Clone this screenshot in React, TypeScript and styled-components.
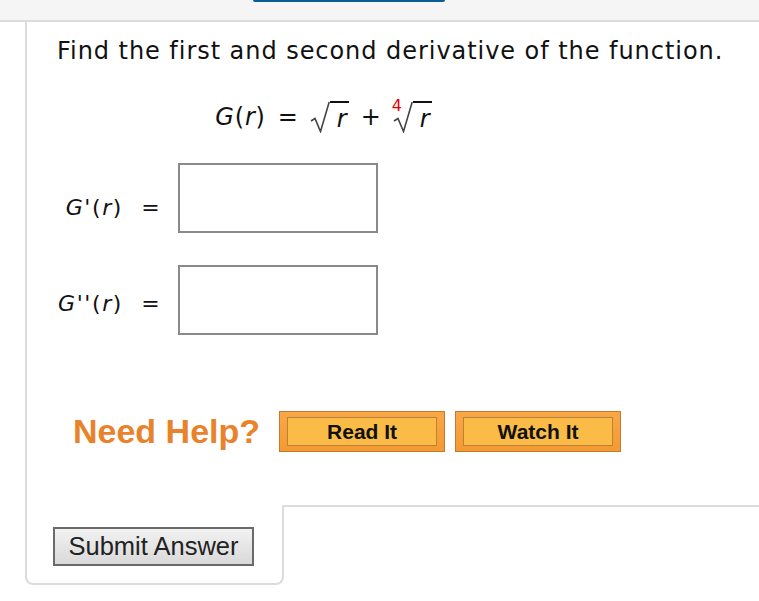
import React from "react";
import styled, { createGlobalStyle } from "styled-components";

const Global = createGlobalStyle`
  html, body { margin: 0; padding: 0; background: #fff; }
  body { width: 759px; height: 601px; overflow: hidden; font-family: "DejaVu Sans", Verdana, sans-serif; }
`;

const TopBar = styled.div`
  height: 20px;
  background: #f5f5f5;
  border-bottom: 2px solid #dcdcdc;
  display: flex;
  align-items: flex-start;
`;

const ActiveTab = styled.div`
  margin-left: 253px;
  width: 192px;
  height: 2px;
  background: #0b5d97;
  border-radius: 0 0 4px 4px;
`;

const Panel = styled.div`
  margin-left: 25px;
  border-left: 2px solid #dcdcdc;
  height: 483px;
  padding-left: 30px;
  box-sizing: border-box;
  padding-top: 15px;
`;

const Question = styled.div`
  font-size: 24px;
  line-height: 28px;
  letter-spacing: 0.95px;
  color: #111;
  white-space: nowrap;
`;

const Equation = styled.div`
  width: 533px;
  height: 32px;
  margin-top: 36px;
  display: flex;
  align-items: center;
  justify-content: center;
  font-size: 24px;
  line-height: 32px;
  color: #111;
  white-space: nowrap;
`;

const Term = styled.span`
  letter-spacing: 0.8px;
`;

const Var = styled.i`
  font-style: italic;
`;

const Op = styled.span`
  margin: 0 12px;
`;

const Radical = styled.span`
  position: relative;
  display: inline-flex;
  align-items: stretch;
  height: 32px;
`;

const RootSvg = styled.svg`
  width: 20px;
  height: 32px;
  display: block;
`;

const Radicand = styled.span`
  display: inline-flex;
  align-items: center;
  border-top: 2px solid #111;
  box-sizing: border-box;
  height: 32px;
  padding: 2px 2px 0 7px;
  font-style: italic;
  line-height: 28px;
`;

const Index = styled.span`
  position: absolute;
  left: -1px;
  top: -3px;
  font-size: 16px;
  line-height: 16px;
  color: #e00000;
`;

const Answers = styled.div`
  margin-top: 30px;
  display: grid;
  grid-template-columns: 66px 55px 200px;
  row-gap: 32px;
  align-items: center;
`;

const Label = styled.div<{ $shift: number }>`
  text-align: right;
  font-size: 22px;
  letter-spacing: 1.6px;
  color: #111;
  white-space: nowrap;
  margin-top: ${(p) => p.$shift * 2}px;
`;

const Eq = styled.div<{ $shift: number }>`
  text-align: center;
  font-size: 22px;
  color: #111;
  margin-top: ${(p) => p.$shift * 2}px;
`;

const AnswerBox = styled.div`
  width: 200px;
  height: 70px;
  box-sizing: border-box;
  border: 2px solid #8a8a8a;
  background: #fff;
`;

const HelpRow = styled.div`
  margin-top: 76px;
  display: flex;
  align-items: center;
  padding-left: 16px;
`;

const HelpText = styled.span`
  font-family: "Liberation Sans", Arial, sans-serif;
  font-weight: bold;
  font-size: 34px;
  color: #e9832b;
  margin-right: 19px;
  white-space: nowrap;
`;

const HelpButton = styled.div`
  width: 166px;
  height: 41px;
  box-sizing: border-box;
  border: 1px solid #c27a37;
  background: linear-gradient(#f9a746, #f59a30);
  padding: 5px 7px;
  margin-right: 10px;
  display: flex;
`;

const HelpInner = styled.div`
  flex: 1;
  border: 1px solid #b9803f;
  background: #fbbc47;
  display: flex;
  align-items: center;
  justify-content: center;
  font-family: "Liberation Sans", Arial, sans-serif;
  font-weight: bold;
  font-size: 21px;
  color: #111;
  white-space: nowrap;
`;

const Footer = styled.div`
  display: flex;
  height: 80px;
`;

const SubmitCell = styled.div`
  margin-left: 25px;
  width: 259px;
  box-sizing: border-box;
  border-left: 2px solid #dcdcdc;
  border-right: 2px solid #dcdcdc;
  border-bottom: 2px solid #dcdcdc;
  border-radius: 0 0 8px 8px;
  padding: 22px 0 0 26px;
`;

const Rest = styled.div`
  flex: 1;
  border-top: 2px solid #dcdcdc;
  margin-left: -2px;
`;

const SubmitButton = styled.div`
  width: 201px;
  height: 39px;
  box-sizing: border-box;
  border: 2px solid #6a6a6a;
  background: linear-gradient(#f2f2f2, #d9d9d9);
  font-family: "Liberation Sans", Arial, sans-serif;
  font-size: 25.5px;
  color: #222;
  display: flex;
  align-items: center;
  justify-content: center;
  white-space: nowrap;
`;

function RootSign() {
  return (
    <RootSvg viewBox="0 0 20 32">
      <path d="M1 20 L5 17.5 L10.5 30.5 L19.2 1" fill="none" stroke="#444" strokeWidth="1.6" strokeLinejoin="miter" />
    </RootSvg>
  );
}

export default function App() {
  return (
    <>
      <Global />
      <TopBar>
        <ActiveTab />
      </TopBar>
      <Panel>
        <Question>Find the first and second derivative of the function.</Question>
        <Equation>
          <Term>
            <Var>G</Var>(<Var>r</Var>)
          </Term>
          <Op>=</Op>
          <Radical>
            <RootSign />
            <Radicand>r</Radicand>
          </Radical>
          <Op>+</Op>
          <Radical>
            <Index>4</Index>
            <RootSign />
            <Radicand>r</Radicand>
          </Radical>
        </Equation>
        <Answers>
          <Label $shift={9}>
            <Var>G</Var>'(<Var>r</Var>)
          </Label>
          <Eq $shift={9}>=</Eq>
          <AnswerBox />
          <Label $shift={3}>
            <Var>G</Var>''(<Var>r</Var>)
          </Label>
          <Eq $shift={3}>=</Eq>
          <AnswerBox />
        </Answers>
        <HelpRow>
          <HelpText>Need Help?</HelpText>
          <HelpButton>
            <HelpInner>Read It</HelpInner>
          </HelpButton>
          <HelpButton>
            <HelpInner>Watch It</HelpInner>
          </HelpButton>
        </HelpRow>
      </Panel>
      <Footer>
        <SubmitCell>
          <SubmitButton>Submit Answer</SubmitButton>
        </SubmitCell>
        <Rest />
      </Footer>
    </>
  );
}
